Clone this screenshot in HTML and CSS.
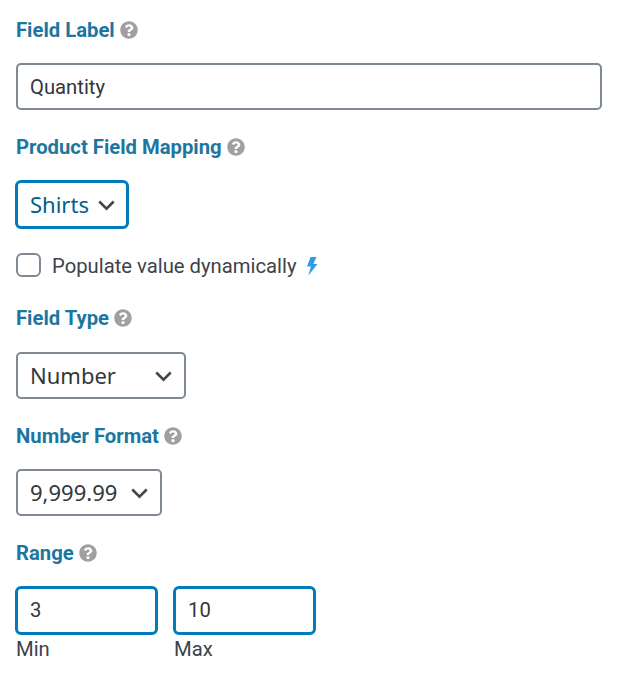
FILE: index.html
```html
<!DOCTYPE html>
<html lang="en">
<head>
<meta charset="utf-8">
<title>Field settings</title>
<link rel="stylesheet" href="styles.css">
</head>
<body>
<svg class="defs" width="0" height="0" aria-hidden="true">
  <symbol id="help" viewBox="0 0 512 512"><path d="M504 256c0 137-111 248-248 248S8 393 8 256 119 8 256 8s248 111 248 248zM262.700 90c-54.500 0-89.300 23-116.600 63.800-3.500 5.300-2.400 12.400 2.700 16.300l34.700 26.300c5.200 3.900 12.600 3 16.700-2.100 17.900-22.700 30.100-35.800 57.300-35.800 20.400 0 45.700 13.100 45.700 32.900 0 15-12.400 22.700-32.600 34-23.600 13.200-54.800 29.700-54.800 70.900V300c0 6.600 5.400 12 12 12h56c6.600 0 12-5.400 12-12v-1.300c0-28.600 83.500-29.800 83.500-107.100C378.300 133.300 317.900 90 262.700 90zM256 338c-25.500 0-46.200 20.700-46.200 46.200s20.700 46.200 46.200 46.200 46.200-20.700 46.200-46.200S281.500 338 256 338z"/></symbol>
  <symbol id="chev" viewBox="0 0 17 11"><path d="M1.300 1.500 8.500 8.700l7.200-7.200" fill="none" stroke="currentColor" stroke-width="2.500"/></symbol>
</svg>
<form class="form">
  <div class="field">
    <label class="label" for="f-label">Field Label <svg class="help"><use href="#help"/></svg></label>
    <input class="control wide" id="f-label" type="text" value="Quantity">
  </div>
  <div class="field">
    <label class="label" for="f-map">Product Field Mapping <svg class="help"><use href="#help"/></svg></label>
    <div class="select-wrap">
      <select class="control select focus shirts" id="f-map"><option>Shirts</option></select>
      <svg class="chev"><use href="#chev"/></svg>
    </div>
  </div>
  <div class="check-row">
    <span class="check"></span>
    <span class="check-text">Populate value dynamically</span>
    <svg class="bolt" viewBox="0 0 14 20"><path d="M5.600 1h5.900L8.300 8h4.200L3.400 19.500 5.900 10.500H2z"/></svg>
  </div>
  <div class="field">
    <label class="label label-tall" for="f-type">Field Type <svg class="help"><use href="#help"/></svg></label>
    <div class="select-wrap">
      <select class="control select type" id="f-type"><option>Number</option></select>
      <svg class="chev"><use href="#chev"/></svg>
    </div>
  </div>
  <div class="field">
    <label class="label" for="f-format">Number Format <svg class="help"><use href="#help"/></svg></label>
    <div class="select-wrap">
      <select class="control select format" id="f-format"><option>9,999.99</option></select>
      <svg class="chev"><use href="#chev"/></svg>
    </div>
  </div>
  <div class="field range">
    <label class="label" for="f-min">Range <svg class="help"><use href="#help"/></svg></label>
    <div class="range-row">
      <div class="range-col">
        <input class="control focus small" id="f-min" type="text" value="3">
        <span class="sub">Min</span>
      </div>
      <div class="range-col">
        <input class="control focus small" id="f-max" type="text" value="10">
        <span class="sub">Max</span>
      </div>
    </div>
  </div>
</form>
</body>
</html>
```
FILE: styles.css
```css
* { box-sizing: border-box; }
html, body { background: #fff; }
body {
  margin: 0;
  padding: 18px 19px 0 16px;
  font-family: Roboto, sans-serif;
  color: #3c434a;
}
.defs { position: absolute; }
.form { display: flex; flex-direction: column; }
.field { display: flex; flex-direction: column; margin-bottom: 25px; }
.label {
  display: flex;
  align-items: center;
  gap: 5px;
  height: 23px;
  margin-bottom: 22px;
  font-size: 20.250px;
  font-weight: 700;
  color: #1d769f;
}
.label-tall { margin-bottom: 23px; }
.help { width: 18px; height: 18px; fill: #a0a0a0; }
.control {
  height: 47px;
  padding: 0 12px;
  border: 2px solid #7e8993;
  border-radius: 5px;
  background: #fff;
  color: #32373c;
  font-family: Roboto, sans-serif;
  font-size: 20.250px;
  outline: none;
}
.wide { width: 586px; }
.select-wrap { position: relative; align-self: flex-start; }
.select {
  display: block;
  appearance: none;
  padding-bottom: 2px;
  font-family: "Noto Sans", sans-serif;
  font-size: 22px;
}
.focus { border: 3px solid #007cba; border-radius: 6px; color: #32373c; }
.shirts { width: 114px; height: 49px; margin-left: -1px; padding-left: 12px; color: #016087; }
.type { width: 170px; }
.format { width: 146px; }
.chev {
  position: absolute;
  right: 14px;
  top: 50%;
  width: 17px;
  height: 11px;
  margin-top: -5px;
  color: #444;
  pointer-events: none;
}
.check-row { display: flex; align-items: center; height: 24px; margin: -1px 0 29px; }
.check {
  width: 25px;
  height: 24px;
  margin-right: 11px;
  border: 2px solid #7e8993;
  border-radius: 6px;
}
.check-text { margin-top: 2px; font-size: 20.250px; color: #3c434a; }
.bolt { width: 14px; height: 20px; margin: 2px 0 0 8px; fill: #2e9be6; }
.range { margin-bottom: 0; }
.range-row { display: flex; gap: 15px; margin-left: -1px; }
.range-col { display: flex; flex-direction: column; }
.small { width: 143px; height: 49px; padding: 0 12px 1px; }
.sub { margin: 1px 0 0 1px; font-size: 20.250px; line-height: 26px; color: #3c434a; }
```
